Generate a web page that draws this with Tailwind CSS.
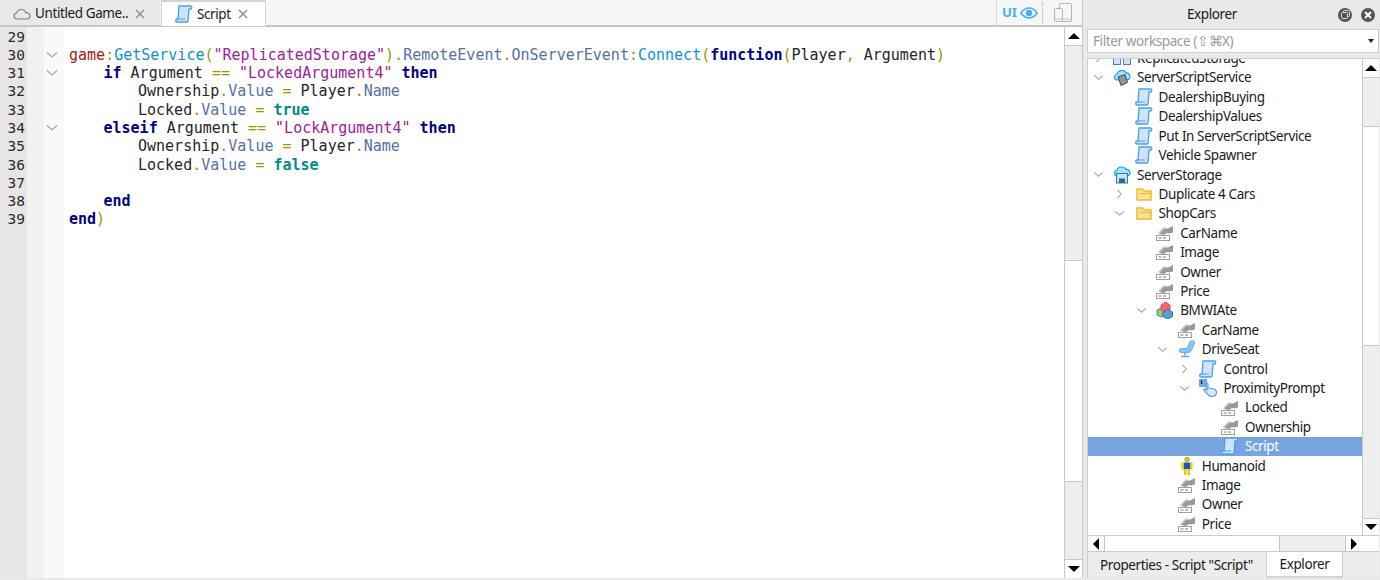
<!DOCTYPE html>
<html lang="en">
<head>
    <meta charset="UTF-8">
    <title>Script - Explorer</title>
    <script src="https://cdn.jsdelivr.net/npm/@tailwindcss/browser@4"></script>
</head>
<body class="bg-[#e9e9e9] overflow-hidden font-['Noto_Sans',sans-serif] text-[13.500px] tracking-[-0.4px] text-[#1a1a1a]">
    <!-- shared icons -->
    <svg class="hidden">
        <symbol id="scroll" viewBox="0 0 18 18">
            <path d="M4 1h11.500c1.700 0 1.700 3 0 3H14l-1 12c0 .7-.5 1-1 1H2c-1.700 0-1.700-3 0-3h1z" fill="#cfe4fb" stroke="#4aa0e8" stroke-width="1.300"/>
            <path d="M3 14h7" stroke="#4aa0e8"/>
        </symbol>
        <symbol id="folder" viewBox="0 0 16 14">
            <path d="M1 2h5.500L8 4h7v9H1z" fill="#fde39a" stroke="#f5b82e" stroke-width="1.500"/>
            <path d="M4 6.500h11" stroke="#f5b82e" stroke-width="1.300"/>
        </symbol>
        <symbol id="value" viewBox="0 0 18 16">
            <path d="M3 9l5-5.500h4L17 1v6.500l-4 1-2-.5-3 2z" fill="#999"/>
            <path d="M2.500 8.500L7.500 3h3" fill="none" stroke="#c8c8c8" stroke-width="1.200"/>
            <rect x=".5" y="10.500" width="13" height="5" fill="#fff" stroke="#a0a0a0"/>
            <path d="M2.500 13h3m1.500 0h3" stroke="#777"/>
        </symbol>
        <symbol id="chevd" viewBox="0 0 12 8"><path d="M1 1.500l5 4.500 5-4.500" fill="none" stroke="#a8a8a8" stroke-width="1.300"/></symbol>
        <symbol id="chevr" viewBox="0 0 8 12"><path d="M1.500 1l4.500 5-4.500 5" fill="none" stroke="#a8a8a8" stroke-width="1.300"/></symbol>
    </svg>

    <div class="w-[1380px] h-[580px] flex overflow-hidden">
        <!-- editor side -->
        <div class="w-[1083px] h-[578px] flex flex-col border-r border-[#c8c8c8]">
            <div class="h-[27px] shrink-0 flex bg-[#f6f6f6] border-b-2 border-[#c6c6c6]">
                <div class="w-[160px] flex items-center bg-[#e9e9e9] pl-[13px] pt-[2px]">
                    <svg width="18" height="12" viewBox="0 0 18 12"><path d="M4.500 11C2 11 1 9.500 1 8c0-1.600 1.200-2.700 2.700-2.800C4.200 3 6 1.500 8.300 1.500c2.200 0 3.900 1.300 4.400 3.200 2.400-.2 4.300 1.200 4.300 3.300 0 1.800-1.400 3-3.300 3z" fill="#e8e8e8" stroke="#808080" stroke-width="1.200"/></svg>
                    <span class="ml-[4px]">Untitled Game..</span>
                    <svg class="ml-[7px]" width="10" height="10" viewBox="0 0 10 10"><path d="M1 1l8 8M9 1l-8 8" stroke="#8a8a8a" stroke-width="1.400"/></svg>
                </div>
                <div class="w-[105px] ml-[1px] flex items-center bg-white border-x border-t-2 border-[#d4d4d4] pl-[13px] -mb-[1px]">
                    <svg width="18" height="18"><use href="#scroll"/></svg>
                    <span class="ml-[4px]">Script</span>
                    <svg class="ml-[7px]" width="10" height="10" viewBox="0 0 10 10"><path d="M1 1l8 8M9 1l-8 8" stroke="#8a8a8a" stroke-width="1.400"/></svg>
                </div>
                <div class="ml-auto w-[86px] flex items-center border-l border-[#d8d8d8] pl-[5px]">
                    <span class="text-[13px] font-bold text-[#3fb2f5] tracking-normal">UI</span>
                    <svg class="ml-[3px]" width="18" height="12" viewBox="0 0 20 13"><path d="M1 6.500C4 2.500 7 1 10 1s6 1.500 9 5.500c-3 4-6 5.500-9 5.500S4 10.500 1 6.500z" fill="#fff" stroke="#3fb2f5" stroke-width="1.800"/><circle cx="10" cy="6.500" r="3.600" fill="#3fb2f5"/></svg>
                    <div class="ml-[4px] h-[21px] border-l border-dotted border-[#a8a8a8]"></div>
                    <svg class="ml-[11px]" width="18" height="19" viewBox="0 0 18 19"><rect x="5.500" y=".5" width="12" height="18" rx="1.500" fill="none" stroke="#b5b5b5"/><rect x=".5" y="5.500" width="8" height="13" rx="1" fill="#f6f6f6" stroke="#b5b5b5"/><path d="M1 16h7M6 16h11" stroke="#c5c5c5"/></svg>
                </div>
            </div>

            <div class="flex-1 flex min-h-0">
                <!-- line numbers -->
                <div class="w-[27px] bg-[#e6e6e6] text-right pr-[2px] pt-[0.5px] font-['DejaVu_Sans_Mono',monospace] text-[14.500px] tracking-normal leading-[18.300px] text-[#2a2a2a]">
                    <div>29</div><div>30</div><div>31</div><div>32</div><div>33</div><div>34</div><div>35</div><div>36</div><div>37</div><div>38</div><div>39</div>
                </div>
                <div class="w-[17px] bg-[#f1f1f1]"></div>
                <!-- folding margin -->
                <div class="w-[20px] bg-[#f9f9f9] pt-[18.800px] pl-[2px]">
                    <div class="h-[18.300px] flex items-center"><svg width="12" height="8"><use href="#chevd"/></svg></div>
                    <div class="h-[18.300px] flex items-center"><svg width="12" height="8"><use href="#chevd"/></svg></div>
                    <div class="h-[36.600px]"></div>
                    <div class="h-[18.300px] flex items-center"><svg width="12" height="8"><use href="#chevd"/></svg></div>
                </div>
                <!-- code -->
                <pre class="flex-1 bg-white pl-[5px] pt-[0.5px] font-['DejaVu_Sans_Mono',monospace] text-[15px] tracking-normal leading-[18.300px] text-[#262626]">

<span class="text-[#a8200d]">game</span><span class="text-[#a09400]">:</span><span class="text-[#1191d5]">GetService</span><span class="text-[#a09400]">(</span><span class="text-[#a0209a]">"ReplicatedStorage"</span><span class="text-[#a09400]">)</span><span class="text-[#a09400]">.</span><span class="text-[#5470a6]">RemoteEvent</span><span class="text-[#a09400]">.</span><span class="text-[#5470a6]">OnServerEvent</span><span class="text-[#a09400]">:</span><span class="text-[#1191d5]">Connect</span><span class="text-[#a09400]">(</span><b class="text-[#00008b]">function</b><span class="text-[#a09400]">(</span>Player<span class="text-[#a09400]">,</span> Argument<span class="text-[#a09400]">)</span>
<span class="inline-block w-[34.500px]"></span><b class="text-[#00008b]">if</b> Argument <span class="text-[#a09400]">==</span> <span class="text-[#a0209a]">"LockedArgument4"</span> <b class="text-[#00008b]">then</b>
<span class="inline-block w-[69px]"></span>Ownership<span class="text-[#a09400]">.</span><span class="text-[#5470a6]">Value</span> <span class="text-[#a09400]">=</span> Player<span class="text-[#a09400]">.</span><span class="text-[#5470a6]">Name</span>
<span class="inline-block w-[69px]"></span>Locked<span class="text-[#a09400]">.</span><span class="text-[#5470a6]">Value</span> <span class="text-[#a09400]">=</span> <b class="text-[#008b8b]">true</b>
<span class="inline-block w-[34.500px]"></span><b class="text-[#00008b]">elseif</b> Argument <span class="text-[#a09400]">==</span> <span class="text-[#a0209a]">"LockArgument4"</span> <b class="text-[#00008b]">then</b>
<span class="inline-block w-[69px]"></span>Ownership<span class="text-[#a09400]">.</span><span class="text-[#5470a6]">Value</span> <span class="text-[#a09400]">=</span> Player<span class="text-[#a09400]">.</span><span class="text-[#5470a6]">Name</span>
<span class="inline-block w-[69px]"></span>Locked<span class="text-[#a09400]">.</span><span class="text-[#5470a6]">Value</span> <span class="text-[#a09400]">=</span> <b class="text-[#008b8b]">false</b>

<span class="inline-block w-[34.500px]"></span><b class="text-[#00008b]">end</b>
<b class="text-[#00008b]">end</b><span class="text-[#a09400]">)</span></pre>
                <!-- editor scrollbar -->
                <div class="w-[18px] flex flex-col border-l border-[#c8c8c8] bg-[#eeeeee]">
                    <div class="h-[19px] bg-white border-b border-[#c8c8c8] flex items-center justify-center"><div class="border-x-[6px] border-x-transparent border-b-[6px] border-b-black"></div></div>
                    <div class="h-[214px]"></div>
                    <div class="h-[222px] bg-white border-y border-[#c8c8c8]"></div>
                    <div class="flex-1"></div>
                    <div class="h-[19px] bg-white border-t border-[#c8c8c8] flex items-center justify-center"><div class="border-x-[6px] border-x-transparent border-t-[6px] border-t-black"></div></div>
                </div>
            </div>
        </div>

        <!-- explorer side -->
        <div class="ml-[4px] w-[292px] h-[578px] flex flex-col">
            <div class="h-[29px] shrink-0 flex items-center">
                <span class="ml-[100px]">Explorer</span>
                <div class="ml-auto mr-[4px] flex gap-[9px]">
                    <div class="w-[14px] h-[14px] rounded-full bg-[#555] flex items-center justify-center">
                        <svg width="9" height="9" viewBox="0 0 9 9"><rect x="2.500" y=".5" width="6" height="6" rx="1" fill="none" stroke="#ddd"/><rect x=".5" y="2.500" width="6" height="6" rx="1" fill="#555" stroke="#ddd"/></svg>
                    </div>
                    <div class="w-[14px] h-[14px] rounded-full bg-[#555] flex items-center justify-center">
                        <svg width="8" height="8" viewBox="0 0 8 8"><path d="M1 1l6 6M7 1L1 7" stroke="#fff" stroke-width="2"/></svg>
                    </div>
                </div>
            </div>
            <div class="h-[24px] shrink-0 bg-white border border-[#d0d0d0] flex items-center pl-[5px] pr-[4px] text-[#9a9a9a]">
                <span>Filter workspace (⇧⌘X)</span>
                <div class="ml-auto border-x-[3.500px] border-x-transparent border-t-[4px] border-t-[#222]"></div>
            </div>
            <div class="h-[5px] shrink-0"></div>
            <div class="flex-1 min-h-0 flex flex-col border-l border-t border-[#cfcfcf]">
                <div class="flex-1 min-h-0 flex">
                    <!-- tree -->
                    <div class="flex-1 overflow-hidden bg-white">
                        <div class="-mt-[10.500px] [&>div]:h-[19.420px] [&>div]:flex [&>div]:items-center">
                            <div>
                                <span class="w-[20px] flex justify-center"><svg width="7" height="10"><use href="#chevr"/></svg></span>
                                <svg class="ml-[5px]" width="18" height="14" viewBox="0 0 18 14"><rect x=".5" y=".5" width="7" height="13" fill="#cfe0f7" stroke="#4f7fc0"/><rect x="10.500" y=".5" width="7" height="13" fill="#cfe0f7" stroke="#4f7fc0"/></svg>
                                <span class="ml-[6px]">ReplicatedStorage</span>
                            </div>
                            <div>
                                <span class="w-[20px] flex justify-center"><svg width="11" height="7"><use href="#chevd"/></svg></span>
                                <svg class="ml-[5px]" width="18" height="18" viewBox="0 0 18 18"><path d="M4.500 11C1 11 0 6 4 5.500 4.500 1 11.500 0 13 4c4-.5 6 6 1 7z" fill="#a9e4fb" stroke="#18a5e6" stroke-width="1.200"/><path d="M5 8l7-2.500 2.500 8L8 16.500z" fill="#8a98a3" stroke="#3d4a55"/></svg>
                                <span class="ml-[6px]">ServerScriptService</span>
                            </div>
                            <div class="pl-[21.600px]">
                                <span class="w-[20px]"></span>
                                <svg class="ml-[5px]" width="18" height="18"><use href="#scroll"/></svg>
                                <span class="ml-[6px]">DealershipBuying</span>
                            </div>
                            <div class="pl-[21.600px]">
                                <span class="w-[20px]"></span>
                                <svg class="ml-[5px]" width="18" height="18"><use href="#scroll"/></svg>
                                <span class="ml-[6px]">DealershipValues</span>
                            </div>
                            <div class="pl-[21.600px]">
                                <span class="w-[20px]"></span>
                                <svg class="ml-[5px]" width="18" height="18"><use href="#scroll"/></svg>
                                <span class="ml-[6px]">Put In ServerScriptService</span>
                            </div>
                            <div class="pl-[21.600px]">
                                <span class="w-[20px]"></span>
                                <svg class="ml-[5px]" width="18" height="18"><use href="#scroll"/></svg>
                                <span class="ml-[6px]">Vehicle Spawner</span>
                            </div>
                            <div>
                                <span class="w-[20px] flex justify-center"><svg width="11" height="7"><use href="#chevd"/></svg></span>
                                <svg class="ml-[5px]" width="18" height="18" viewBox="0 0 18 18"><path d="M4.500 10C1 10 0 5 4 4.500 4.500 0 11.500 0 13 3.500c4-.5 6 6 1 6.500z" fill="#a9e4fb" stroke="#18a5e6" stroke-width="1.200"/><rect x="3.500" y="7.500" width="11" height="9.500" fill="#c9e4f0" stroke="#2d7ea5"/><rect x="6" y="12.500" width="6" height="4.500" fill="#2a6a8a"/></svg>
                                <span class="ml-[6px]">ServerStorage</span>
                            </div>
                            <div class="pl-[21.600px]">
                                <span class="w-[20px] flex justify-center"><svg width="7" height="10"><use href="#chevr"/></svg></span>
                                <svg class="ml-[6px] mr-[1px]" width="16" height="14"><use href="#folder"/></svg>
                                <span class="ml-[6px]">Duplicate 4 Cars</span>
                            </div>
                            <div class="pl-[21.600px]">
                                <span class="w-[20px] flex justify-center"><svg width="11" height="7"><use href="#chevd"/></svg></span>
                                <svg class="ml-[6px] mr-[1px]" width="16" height="14"><use href="#folder"/></svg>
                                <span class="ml-[6px]">ShopCars</span>
                            </div>
                            <div class="pl-[43.200px]">
                                <span class="w-[20px]"></span>
                                <svg class="ml-[5px]" width="18" height="16"><use href="#value"/></svg>
                                <span class="ml-[6px]">CarName</span>
                            </div>
                            <div class="pl-[43.200px]">
                                <span class="w-[20px]"></span>
                                <svg class="ml-[5px]" width="18" height="16"><use href="#value"/></svg>
                                <span class="ml-[6px]">Image</span>
                            </div>
                            <div class="pl-[43.200px]">
                                <span class="w-[20px]"></span>
                                <svg class="ml-[5px]" width="18" height="16"><use href="#value"/></svg>
                                <span class="ml-[6px]">Owner</span>
                            </div>
                            <div class="pl-[43.200px]">
                                <span class="w-[20px]"></span>
                                <svg class="ml-[5px]" width="18" height="16"><use href="#value"/></svg>
                                <span class="ml-[6px]">Price</span>
                            </div>
                            <div class="pl-[43.200px]">
                                <span class="w-[20px] flex justify-center"><svg width="11" height="7"><use href="#chevd"/></svg></span>
                                <svg class="ml-[5px]" width="18" height="18" viewBox="0 0 18 18"><path d="M1 9l4-2 4 2v5l-4 2-4-2z" fill="#8fc98a" stroke="#4c9a4a"/><path d="M5 4l4.500-3L14 4v5l-4.500 2.500L5 9z" fill="#f26a6a" stroke="#e05050"/><path d="M7 11l4.500-2.500L16.500 11v4.500L11.500 18 7 15.500z" fill="#5c9bd5" stroke="#2f6fa8"/></svg>
                                <span class="ml-[6px]">BMWIAte</span>
                            </div>
                            <div class="pl-[64.800px]">
                                <span class="w-[20px]"></span>
                                <svg class="ml-[5px]" width="18" height="16"><use href="#value"/></svg>
                                <span class="ml-[6px]">CarName</span>
                            </div>
                            <div class="pl-[64.800px]">
                                <span class="w-[20px] flex justify-center"><svg width="11" height="7"><use href="#chevd"/></svg></span>
                                <svg class="ml-[5px]" width="18" height="18" viewBox="0 0 18 18"><path d="M14 .5c2.500 0 3 2 2.500 3.500L13 11c-.5 1-1.500 1.500-2.500 1.500H3c-2.500 0-2.500-4 0-4h6l2.500-6c.4-1.200 1.300-2 2.500-2z" fill="#8ec3f5" stroke="#5fa5e8" stroke-width=".8"/><path d="M7 12.500v3M3 16.500h8" stroke="#5fa5e8" stroke-width="1.600"/></svg>
                                <span class="ml-[6px]">DriveSeat</span>
                            </div>
                            <div class="pl-[86.400px]">
                                <span class="w-[20px] flex justify-center"><svg width="7" height="10"><use href="#chevr"/></svg></span>
                                <svg class="ml-[5px]" width="18" height="18"><use href="#scroll"/></svg>
                                <span class="ml-[6px]">Control</span>
                            </div>
                            <div class="pl-[86.400px]">
                                <span class="w-[20px] flex justify-center"><svg width="11" height="7"><use href="#chevd"/></svg></span>
                                <svg class="ml-[5px]" width="18" height="18" viewBox="0 0 18 18"><rect x="0" y="0" width="8" height="8" fill="#6fa8e8"/><path d="M2.500 1.500v3.500" stroke="#123" stroke-width="1.200"/><path d="M7 4.500c1-1 2 0 2 1V9l4 .5c3 .5 4.500 2 4.500 4 0 3-2 4-4.500 4-3 0-4-2-5-3l-3-3c-.5-1 .5-2 1.500-1.500l1.500 1z" fill="#d6e8fb" stroke="#5b9ce0" stroke-width="1.200"/></svg>
                                <span class="ml-[6px]">ProximityPrompt</span>
                            </div>
                            <div class="pl-[108px]">
                                <span class="w-[20px]"></span>
                                <svg class="ml-[5px]" width="18" height="16"><use href="#value"/></svg>
                                <span class="ml-[6px]">Locked</span>
                            </div>
                            <div class="pl-[108px]">
                                <span class="w-[20px]"></span>
                                <svg class="ml-[5px]" width="18" height="16"><use href="#value"/></svg>
                                <span class="ml-[6px]">Ownership</span>
                            </div>
                            <div class="pl-[108px] bg-[#76a4e0] text-white">
                                <span class="w-[20px]"></span>
                                <svg class="ml-[5px]" width="18" height="18"><use href="#scroll"/></svg>
                                <span class="ml-[6px]">Script</span>
                            </div>
                            <div class="pl-[64.800px]">
                                <span class="w-[20px]"></span>
                                <svg class="ml-[5px]" width="18" height="18" viewBox="0 0 18 18"><circle cx="9" cy="2.500" r="2.200" fill="#e8c800" stroke="#8a7a00" stroke-width=".6"/><rect x="6" y="5.500" width="6" height="6.500" fill="#1558d6"/><rect x="3.500" y="5.500" width="2.500" height="7" fill="#e8c800"/><rect x="12" y="5.500" width="2.500" height="7" fill="#e8c800"/><rect x="6" y="12" width="2.500" height="6" fill="#e8c800"/><rect x="9.500" y="12" width="2.500" height="6" fill="#e8c800"/></svg>
                                <span class="ml-[6px]">Humanoid</span>
                            </div>
                            <div class="pl-[64.800px]">
                                <span class="w-[20px]"></span>
                                <svg class="ml-[5px]" width="18" height="16"><use href="#value"/></svg>
                                <span class="ml-[6px]">Image</span>
                            </div>
                            <div class="pl-[64.800px]">
                                <span class="w-[20px]"></span>
                                <svg class="ml-[5px]" width="18" height="16"><use href="#value"/></svg>
                                <span class="ml-[6px]">Owner</span>
                            </div>
                            <div class="pl-[64.800px]">
                                <span class="w-[20px]"></span>
                                <svg class="ml-[5px]" width="18" height="16"><use href="#value"/></svg>
                                <span class="ml-[6px]">Price</span>
                            </div>
                        </div>
                    </div>
                    <!-- vertical scrollbar -->
                    <div class="w-[17px] flex flex-col border-l border-[#c8c8c8] bg-[#eeeeee]">
                        <div class="h-[19px] bg-white border-b border-[#c8c8c8] flex items-center justify-center"><div class="border-x-[6px] border-x-transparent border-b-[6px] border-b-black"></div></div>
                        <div class="h-[48px]"></div>
                        <div class="h-[220px] bg-white border-y border-[#c8c8c8]"></div>
                        <div class="flex-1"></div>
                        <div class="h-[17px] bg-white border-t border-[#c8c8c8] flex items-center justify-center"><div class="border-x-[6px] border-x-transparent border-t-[6px] border-t-black"></div></div>
                    </div>
                </div>
                <!-- horizontal scrollbar -->
                <div class="h-[17px] shrink-0 flex bg-[#eeeeee] border-y border-[#c8c8c8]">
                    <div class="w-[17px] bg-white border-r border-[#c8c8c8] flex items-center justify-center"><div class="border-y-[6px] border-y-transparent border-r-[6px] border-r-black"></div></div>
                    <div class="w-[175px] bg-white border-r border-[#c8c8c8]"></div>
                    <div class="flex-1"></div>
                    <div class="w-[17px] bg-white border-l border-[#c8c8c8] flex items-center justify-center"><div class="border-y-[6px] border-y-transparent border-l-[6px] border-l-black"></div></div>
                    <div class="w-[17px] bg-white"></div>
                </div>
                <!-- panel tabs -->
                <div class="h-[26px] shrink-0 flex bg-[#ececec]">
                    <div class="w-[178px] flex items-center pl-[12px]">Properties - Script "Script"</div>
                    <div class="w-[77px] flex items-center justify-center bg-white border-x border-b-2 border-[#d4d4d4]">Explorer</div>
                </div>
            </div>
        </div>
    </div>
</body>
</html>
